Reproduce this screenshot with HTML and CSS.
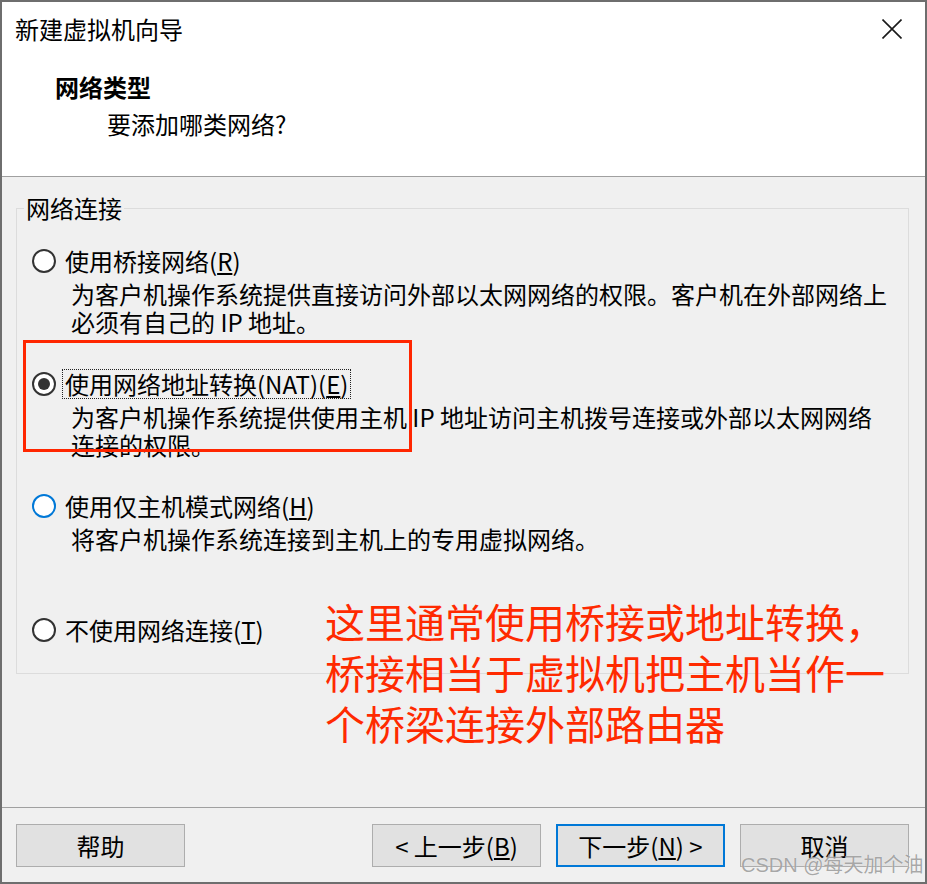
FILE: index.html
```html
<!DOCTYPE html>
<html lang="zh-CN">
<head>
<meta charset="utf-8">
<title>新建虚拟机向导</title>
<link rel="stylesheet" href="styles.css">
</head>
<body>
<div class="window">
  <div class="header">
    <div class="titlebar">
      <span class="title">新建虚拟机向导</span>
      <svg class="close" width="20" height="20" viewBox="0 0 20 20"><path d="M0.5 0.5 L19.5 19.5 M19.5 0.5 L0.5 19.5" stroke="#1a1a1a" stroke-width="1.6" fill="none"/></svg>
    </div>
    <div class="heading">网络类型</div>
    <div class="subheading">要添加哪类网络?</div>
  </div>
  <div class="content">
    <fieldset class="group">
      <legend class="legend">网络连接</legend>
      <div class="options">
        <div class="option opt1">
          <div class="row"><span class="radio"></span><span class="label">使用桥接网络(<u>R</u>)</span></div>
          <div class="desc">为客户机操作系统提供直接访问外部以太网网络的权限。客户机在外部网络上<br>必须有自己的 IP 地址。</div>
        </div>
        <div class="option opt2">
          <div class="row"><span class="radio checked"></span><span class="label focused">使用网络地址转换(NAT)(<u>E</u>)</span></div>
          <div class="desc">为客户机操作系统提供使用主机 IP 地址访问主机拨号连接或外部以太网网络<br>连接的权限。</div>
        </div>
        <div class="option opt3">
          <div class="row"><span class="radio hover"></span><span class="label">使用仅主机模式网络(<u>H</u>)</span></div>
          <div class="desc">将客户机操作系统连接到主机上的专用虚拟网络。</div>
        </div>
        <div class="option opt4">
          <div class="row"><span class="radio"></span><span class="label">不使用网络连接(<u>T</u>)</span></div>
        </div>
      </div>
    </fieldset>
  </div>
  <div class="footer">
    <button class="btn">帮助</button>
    <div class="spacer"></div>
    <div class="btngroup">
      <button class="btn">&lt; 上一步(<u>B</u>)</button>
      <button class="btn primary">下一步(<u>N</u>) &gt;</button>
      <button class="btn">取消</button>
    </div>
  </div>
  <div class="redbox"></div>
  <div class="note">这里通常使用桥接或地址转换，<br>桥接相当于虚拟机把主机当作一<br>个桥梁连接外部路由器</div>
  <div class="watermark">CSDN @每天加个油</div>
</div>
</body>
</html>
```

FILE: styles.css
```css
* { box-sizing: border-box; }
html, body { margin: 0; padding: 0; }
body {
  font-family: "Noto Sans CJK SC", "Noto Sans", sans-serif;
  color: #000;
  background: #f0f0f0;
}
.window {
  position: relative;
  width: 927px;
  height: 884px;
  border: 2px solid #6e6e6e;
  background: #f0f0f0;
  display: flex;
  flex-direction: column;
}
.header {
  height: 175px;
  flex: none;
  background: #fff;
  border-bottom: 1px solid #a0a0a0;
}
.titlebar {
  display: flex;
  align-items: center;
  justify-content: space-between;
  height: 32px;
  margin-top: 11px;
  padding-left: 13px;
  padding-right: 23px;
}
.title { font-size: 24px; line-height: 32px; }
.close { display: block; margin-top: -1px; }
.heading {
  margin-top: 26px;
  padding-left: 53px;
  font-size: 24px;
  line-height: 32px;
  font-weight: bold;
}
.subheading {
  margin-top: 5px;
  padding-left: 105px;
  font-size: 24px;
  line-height: 32px;
}
.content {
  height: 630px;
  flex: none;
  padding-top: 15px;
}
.group {
  margin: 0 16px 0 14px;
  padding: 0;
  border: 1px solid #dcdcdc;
  min-inline-size: 0;
}
.legend {
  margin-left: 7px;
  padding: 0 2px;
  font-size: 24px;
  line-height: 32px;
}
.options {
  display: flex;
  flex-direction: column;
  padding: 23px 0 29px 0;
}
.option { padding-left: 15px; }
.opt2 { margin-top: 34px; }
.opt3 { margin-top: 33px; }
.opt4 { margin-top: 63px; }
.row {
  display: flex;
  align-items: center;
  height: 28px;
}
.radio {
  width: 24px;
  height: 24px;
  flex: none;
  border: 2px solid #333;
  border-radius: 50%;
  background: #fff;
  display: flex;
  align-items: center;
  justify-content: center;
}
.radio.checked::after {
  content: "";
  width: 12px;
  height: 12px;
  border-radius: 50%;
  background: #333;
}
.radio.hover { border-color: #0078d7; }
.label {
  margin-left: 7px;
  padding: 0 2px;
  font-size: 24px;
  line-height: 28px;
  white-space: nowrap;
}
.label u, .btn u { text-underline-offset: 2px; }
.label.focused { outline: 1px dotted #222; }
.desc {
  margin-top: 5px;
  padding-left: 39px;
  font-size: 24px;
  line-height: 28px;
  white-space: nowrap;
}
.footer {
  flex: 1;
  border-top: 1px solid #a0a0a0;
  display: flex;
  align-items: flex-start;
  padding: 16px 16px 0 14px;
}
.spacer { flex: 1; }
.btngroup { display: flex; gap: 15px; }
.btn {
  width: 169px;
  height: 43px;
  border: 1px solid #adadad;
  background: #e1e1e1;
  font-family: "Noto Sans CJK SC", "Noto Sans", sans-serif;
  font-size: 24px;
  line-height: 28px;
  color: #000;
  padding: 0;
  margin: 0;
}
.btn.primary { border: 2px solid #0078d7; }
.redbox {
  position: absolute;
  left: 21px;
  top: 338px;
  width: 389px;
  height: 112px;
  border: 3px solid #ff2600;
}
.note {
  position: absolute;
  left: 323px;
  top: 594px;
  font-size: 40px;
  line-height: 51px;
  color: #ff2a00;
  white-space: nowrap;
}
.watermark {
  position: absolute;
  left: 739px;
  top: 851px;
  font-family: "Liberation Sans", "Noto Sans CJK SC", sans-serif;
  font-size: 20px;
  line-height: 24px;
  color: rgba(110, 110, 110, 0.6);
  text-shadow: 0 0 1px rgba(255, 255, 255, 0.9);
  white-space: nowrap;
}
```
